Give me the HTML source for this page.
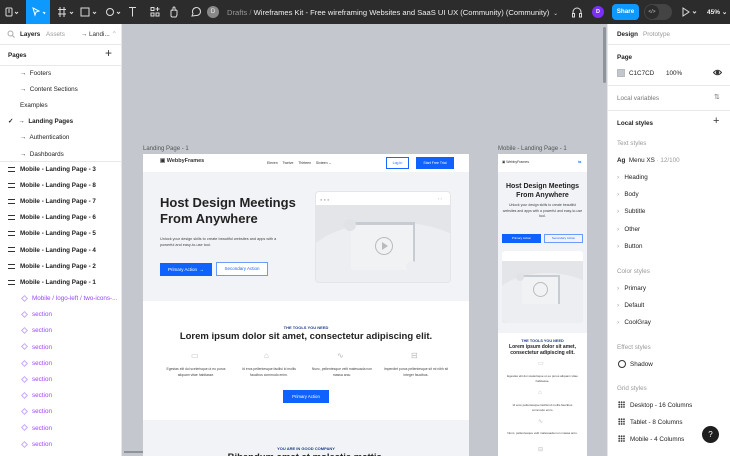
<!DOCTYPE html>
<html><head><meta charset="utf-8"><style>
*{margin:0;padding:0;box-sizing:border-box}
body{width:730px;height:456px;overflow:hidden;font-family:"Liberation Sans",sans-serif;background:#c4c8ce;position:relative}
.a{position:absolute;white-space:nowrap}
.tb{position:absolute;left:0;top:0;width:730px;height:24px;background:#2c2c2c;color:#fff}
.lp{position:absolute;left:0;top:24px;width:122px;height:432px;background:#fff;border-right:1px solid #e6e6e6}
.rp{position:absolute;left:607px;top:24px;width:123px;height:432px;background:#fff;border-left:1px solid #e6e6e6}
.li{position:absolute;font-size:6.3px;color:#222}
.bold{font-weight:bold}
.hr{position:absolute;height:1px;background:#e8e8e8}
.sec{color:#9747ff}
.ic{position:absolute;width:7px;height:5px;border-top:1.2px solid #333;border-bottom:1.2px solid #333}
.dia{position:absolute;width:5px;height:5px;border:1px solid #c9a8ff;transform:rotate(45deg)}
.rt{position:absolute;font-size:6.3px;color:#222}
.gr{color:#999}
.grid{position:absolute;width:7px;height:7px;background-image:radial-gradient(circle,#333 0.9px,transparent 1px);background-size:2.4px 2.4px}
.ft{position:absolute;width:66px;text-align:center;font-size:3.4px;color:#444;line-height:6px;white-space:normal}
</style></head><body>
<div class="tb">
 <div class="a" style="left:26px;top:0;width:24px;height:24px;background:#0d99ff"></div>
 <svg class="a" style="left:0;top:0" width="230" height="24" fill="none" stroke="#ddd" stroke-width="1">
  <rect x="6" y="8" width="6" height="8" rx="1"/><path d="M8 10h2M8 12h2"/><path d="M15 12l1.5 1.5L18 12"/>
  <path d="M33 8l6 3-3 1-1 3z" stroke="#fff"/><path d="M43 12l1.5 1.5L45 12" stroke="#fff"/>
  <path d="M60 7v10M64 7v10M58 9.5h8M58 14h8"/><path d="M70 12l1.5 1.5L73 12"/>
  <rect x="81" y="8" width="8" height="8"/><path d="M93 12l1.5 1.5L96 12"/>
  <circle cx="110" cy="12" r="3.5"/><path d="M117 12l1.5 1.5L120 12"/>
  <path d="M129 7.5h7M132.5 7.5v9"/>
  <rect x="151" y="7.5" width="3" height="3"/><rect x="151" y="13" width="3" height="3"/><rect x="156" y="13" width="3" height="3"/><path d="M157.5 7v4M155.5 9h4"/>
  <path d="M171 16v-5a1 1 0 012 0v-3a1 1 0 012 0v3a1 1 0 012 0v4l-1 2h-4z"/>
  <path d="M192 16l1-2.5a4 4 0 113 2z"/>
 </svg>
 <div class="a" style="left:207px;top:6px;width:12px;height:12px;border-radius:6px;background:#888;color:#eee;font-size:6px;text-align:center;line-height:12px">D</div>
 <div class="a" style="left:227px;top:7.5px;font-size:7.6px;color:#999">Drafts <span style="color:#777">/</span> <span style="color:#eee">Wireframes Kit - Free wireframing Websites and SaaS UI UX (Community) (Community)</span> <span style="font-size:6px;color:#ccc">&nbsp;⌄</span></div>
 <svg class="a" style="left:570px;top:5px" width="14" height="14" fill="none" stroke="#ddd" stroke-width="1"><path d="M3 9V7a4 4 0 018 0v2"/><rect x="2.5" y="8.5" width="2" height="3.5"/><rect x="9.5" y="8.5" width="2" height="3.5"/></svg>
 <div class="a" style="left:592px;top:6px;width:12px;height:12px;border-radius:6px;background:#7b2ff7;font-size:5.5px;text-align:center;line-height:12px;font-weight:bold">D</div>
 <div class="a" style="left:612px;top:4px;width:27px;height:16px;border-radius:4px;background:#0d99ff;font-size:6.3px;font-weight:bold;text-align:center;line-height:16px">Share</div>
 <div class="a" style="left:644px;top:4px;width:28px;height:16px;border-radius:8px;background:#444"><div class="a" style="left:1px;top:1px;width:14px;height:14px;border-radius:7px;background:#2c2c2c;font-size:5px;text-align:center;line-height:14px;color:#ccc">&lt;/&gt;</div></div>
 <svg class="a" style="left:680px;top:6px" width="20" height="12" fill="none" stroke="#ddd"><path d="M3 2l6 4-6 4z"/><path d="M13 5.5l1.5 1.5L16 5.5"/></svg>
 <div class="a" style="left:707px;top:8px;font-size:6.5px;color:#eee;font-weight:bold">45% ⌄</div>
</div>

<div class="lp">
 <svg class="a" style="left:7px;top:6px" width="8" height="8" fill="none" stroke="#aaa"><circle cx="3.5" cy="3.5" r="2.5"/><path d="M5.5 5.5l2 2"/></svg>
 <div class="li bold" style="left:20px;top:7px">Layers</div>
 <div class="li" style="left:46px;top:7px;color:#999">Assets</div>
 <div class="li" style="left:81px;top:7px;color:#333">→ Landi... <span style="color:#aaa">⌃</span></div>
 <div class="hr" style="left:0;top:20px;width:122px"></div>
 <div class="li bold" style="left:8px;top:28px">Pages</div>
 <div class="a" style="left:105px;top:22px;font-size:12px;color:#333">+</div>
 <div class="hr" style="left:0;top:41px;width:122px"></div>
 <div class="li" style="left:20px;top:46px">→&nbsp; Footers</div>
 <div class="li" style="left:20px;top:62px">→&nbsp; Content Sections</div>
 <div class="li" style="left:20px;top:78px">Examples</div>
 <div class="li bold" style="left:8px;top:94px">✓ &nbsp; →&nbsp; Landing Pages</div>
 <div class="li" style="left:20px;top:110px">→&nbsp; Authentication</div>
 <div class="li" style="left:20px;top:127px">→&nbsp; Dashboards</div>
 <div class="hr" style="left:0;top:137px;width:122px"></div>
 <div class="ic" style="left:8px;top:143px"></div><div class="li bold" style="left:20px;top:142px">Mobile - Landing Page - 3</div>
 <div class="ic" style="left:8px;top:159px"></div><div class="li bold" style="left:20px;top:158px">Mobile - Landing Page - 8</div>
 <div class="ic" style="left:8px;top:175px"></div><div class="li bold" style="left:20px;top:174px">Mobile - Landing Page - 7</div>
 <div class="ic" style="left:8px;top:191px"></div><div class="li bold" style="left:20px;top:190px">Mobile - Landing Page - 6</div>
 <div class="ic" style="left:8px;top:207px"></div><div class="li bold" style="left:20px;top:206px">Mobile - Landing Page - 5</div>
 <div class="ic" style="left:8px;top:223px"></div><div class="li bold" style="left:20px;top:223px">Mobile - Landing Page - 4</div>
 <div class="ic" style="left:8px;top:240px"></div><div class="li bold" style="left:20px;top:239px">Mobile - Landing Page - 2</div>
 <div class="ic" style="left:8px;top:256px"></div><div class="li bold" style="left:20px;top:255px">Mobile - Landing Page - 1</div>
 <div class="dia" style="left:22px;top:272px"></div><div class="li sec" style="left:32px;top:271px">Mobile / logo-left / two-icons-...</div>
 <div class="dia" style="left:22px;top:288px"></div><div class="li sec" style="left:32px;top:287px">section</div>
 <div class="dia" style="left:22px;top:304px"></div><div class="li sec" style="left:32px;top:303px">section</div>
 <div class="dia" style="left:22px;top:320px"></div><div class="li sec" style="left:32px;top:320px">section</div>
 <div class="dia" style="left:22px;top:337px"></div><div class="li sec" style="left:32px;top:336px">section</div>
 <div class="dia" style="left:22px;top:353px"></div><div class="li sec" style="left:32px;top:352px">section</div>
 <div class="dia" style="left:22px;top:369px"></div><div class="li sec" style="left:32px;top:368px">section</div>
 <div class="dia" style="left:22px;top:385px"></div><div class="li sec" style="left:32px;top:384px">section</div>
 <div class="dia" style="left:22px;top:401px"></div><div class="li sec" style="left:32px;top:401px">section</div>
 <div class="dia" style="left:22px;top:418px"></div><div class="li sec" style="left:32px;top:417px">section</div>
</div>

<!-- canvas -->
<div class="a" style="left:603px;top:27px;width:3px;height:56px;background:#8f949a;border-radius:2px"></div>
<div class="a" style="left:124px;top:451px;width:43px;height:2px;background:#8f949a"></div>
<div class="a" style="left:143px;top:146px;font-size:6px;color:#555">Landing Page - 1</div>
<div class="a" style="left:498px;top:146px;font-size:6px;color:#555">Mobile - Landing Page - 1</div>

<div class="a" style="left:143px;top:154px;width:326px;height:302px;background:#fff;overflow:hidden">
 <div class="a" style="left:17px;top:4px;font-size:5.5px;font-weight:bold;color:#333">▣ WebbyFrames</div>
 <div class="a" style="left:124px;top:7px;font-size:3.5px;color:#333">Eleven &nbsp;&nbsp;&nbsp; Twelve &nbsp;&nbsp;&nbsp; Thirteen &nbsp;&nbsp;&nbsp; Sixteen ⌄</div>
 <div class="a" style="left:243px;top:3px;width:23px;height:12px;border:1px solid #1a66ff;font-size:3.5px;color:#1a66ff;text-align:center;line-height:10px">Log In</div>
 <div class="a" style="left:273px;top:3px;width:38px;height:12px;background:#0f62fe;font-size:3.5px;color:#fff;text-align:center;line-height:12px">Start Free Trial</div>
 <div class="a" style="left:0;top:18px;width:326px;height:129px;background:#f2f3f6"></div>
 <div class="a" style="left:17px;top:41px;font-size:13px;font-weight:bold;color:#222;line-height:16px;white-space:normal;width:140px">Host Design Meetings From Anywhere</div>
 <div class="a" style="left:17px;top:82px;font-size:3.8px;color:#444;line-height:6px;white-space:normal;width:130px">Unlock your design skills to create beautiful websites and apps with a powerful and easy-to-use tool.</div>
 <div class="a" style="left:17px;top:109px;width:52px;height:13px;background:#0f62fe;font-size:4.5px;color:#fff;text-align:center;line-height:13px">Primary Action &nbsp;→</div>
 <div class="a" style="left:73px;top:108px;width:52px;height:14px;border:1px solid #6b9bff;background:#fff;font-size:4.5px;color:#1a66ff;text-align:center;line-height:12px">Secondary Action</div>
 <div class="a" style="left:172px;top:37px;width:136px;height:92px;background:#e3e5e9;border-radius:4px;border:1px solid #e3e5e9;overflow:hidden">
  <div class="a" style="left:0;top:0;width:136px;height:13px;background:#fff"></div>
  <div class="a" style="left:4px;top:5px;font-size:4px;color:#bbb">● ● ●</div>
  <div class="a" style="left:122px;top:4px;font-size:4px;color:#aaa">‹ ›</div>
  <div class="a" style="left:-10px;top:30px;width:170px;height:80px;border-radius:50%;background:#eceef1"></div>
  <div class="a" style="left:37px;top:30px;width:62px;height:45px;background:#c8ccd2"></div>
  <div class="a" style="left:35px;top:33px;width:62px;height:45px;background:#f1f2f4"></div>
  <div class="a" style="left:28px;top:27px;width:12px;height:12px;border-radius:6px;background:#e0e2e6"></div>
  <div class="a" style="left:90px;top:69px;width:12px;height:12px;border-radius:6px;background:#eceef1"></div>
  <div class="a" style="left:59px;top:45px;width:18px;height:18px;border-radius:9px;border:1.5px solid #bbb"></div>
  <div class="a" style="left:66px;top:50px;width:0;height:0;border-left:6px solid #bbb;border-top:4px solid transparent;border-bottom:4px solid transparent"></div>
 </div>
 <div class="a" style="left:0;top:171px;width:326px;text-align:center;font-size:4px;font-weight:bold;color:#1e3a8a">THE TOOLS YOU NEED</div>
 <div class="a" style="left:0;top:177px;width:326px;text-align:center;font-size:9.5px;font-weight:bold;color:#222">Lorem ipsum dolor sit amet, consectetur adipiscing elit.</div>
 <div class="a" style="left:48px;top:197px;font-size:8px;color:#bbb">▭</div>
 <div class="a" style="left:121px;top:197px;font-size:8px;color:#bbb">⌂</div>
 <div class="a" style="left:194px;top:197px;font-size:8px;color:#bbb">∿</div>
 <div class="a" style="left:268px;top:197px;font-size:8px;color:#bbb">⊟</div>
 <div class="ft" style="left:20px;top:212px">Egestas elit dui scelerisque ut eu purus aliquam vitae habitasse.</div>
 <div class="ft" style="left:93px;top:212px">Id eros pellentesque facilisi id mollis faucibus commodo enim.</div>
 <div class="ft" style="left:166px;top:212px">Nunc, pellentesque velit malesuada non massa arcu.</div>
 <div class="ft" style="left:240px;top:212px">Imperdiet purus pellentesque sit mi nibh sit integer faucibus.</div>
 <div class="a" style="left:140px;top:236px;width:46px;height:13px;background:#0f62fe;font-size:4.3px;color:#fff;text-align:center;line-height:13px">Primary Action</div>
 <div class="a" style="left:0;top:266px;width:326px;height:40px;background:#f2f3f6"></div>
 <div class="a" style="left:0;top:292px;width:326px;text-align:center;font-size:4px;font-weight:bold;color:#1e3a8a">YOU ARE IN GOOD COMPANY</div>
 <div class="a" style="left:0;top:298px;width:326px;text-align:center;font-size:9.5px;font-weight:bold;color:#222">Bibendum amet at molestie mattis.</div>
</div>

<div class="a" style="left:498px;top:154px;width:89px;height:302px;background:#fff;overflow:hidden">
 <div class="a" style="left:4px;top:6px;font-size:3.5px;color:#333">▣ WebbyFrames</div>
 <div class="a" style="left:80px;top:5px;font-size:4px;color:#1a66ff">⇆</div>
 <div class="a" style="left:0;top:18px;width:89px;height:161px;background:#f2f3f6"></div>
 <div class="a" style="left:0;top:28px;width:89px;text-align:center;font-size:7px;font-weight:bold;color:#222;line-height:9px;white-space:normal">Host Design Meetings From Anywhere</div>
 <div class="a" style="left:4px;top:49px;width:81px;text-align:center;font-size:3.5px;color:#444;line-height:5.5px;white-space:normal">Unlock your design skills to create beautiful websites and apps with a powerful and easy-to-use tool.</div>
 <div class="a" style="left:4px;top:80px;width:39px;height:9px;background:#0f62fe;font-size:3px;color:#fff;text-align:center;line-height:9px">Primary Action</div>
 <div class="a" style="left:46px;top:80px;width:39px;height:9px;border:1px solid #6b9bff;font-size:3px;color:#1a66ff;text-align:center;line-height:7px">Secondary Action</div>
 <div class="a" style="left:4px;top:97px;width:81px;height:72px;background:#e3e5e9;border-radius:3px;overflow:hidden">
  <div class="a" style="left:0;top:0;width:81px;height:10px;background:#fff"></div>
  <div class="a" style="left:-10px;top:22px;width:110px;height:60px;border-radius:50%;background:#eceef1"></div>
  <div class="a" style="left:20px;top:24px;width:38px;height:29px;background:#f1f2f4;border-top:2px solid #c8ccd2;border-right:2px solid #c8ccd2"></div>
  <div class="a" style="left:31px;top:31px;width:15px;height:15px;border-radius:8px;border:1.3px solid #bbb"></div>
  <div class="a" style="left:14px;top:22px;width:8px;height:8px;border-radius:4px;background:#e0e2e6"></div>
 </div>
 <div class="a" style="left:0;top:185px;width:89px;text-align:center;font-size:3.8px;font-weight:bold;color:#1e3a8a">THE TOOLS YOU NEED</div>
 <div class="a" style="left:0;top:190px;width:89px;text-align:center;font-size:5px;font-weight:bold;color:#222;line-height:6px;white-space:normal">Lorem ipsum dolor sit amet, consectetur adipiscing elit.</div>
 <div class="a" style="left:40px;top:206px;font-size:6px;color:#bbb">▭</div>
 <div class="a" style="left:8px;top:220px;width:73px;text-align:center;font-size:3px;color:#444;line-height:5px;white-space:normal">Egestas elit dui scelerisque ut eu purus aliquam vitae habitasse.</div>
 <div class="a" style="left:40px;top:236px;font-size:6px;color:#bbb">⌂</div>
 <div class="a" style="left:8px;top:249px;width:73px;text-align:center;font-size:3px;color:#444;line-height:5px;white-space:normal">Id eros pellentesque facilisi id mollis faucibus commodo enim.</div>
 <div class="a" style="left:40px;top:264px;font-size:6px;color:#bbb">∿</div>
 <div class="a" style="left:8px;top:277px;width:73px;text-align:center;font-size:3px;color:#444;line-height:5px;white-space:normal">Nunc, pellentesque velit malesuada non massa arcu.</div>
 <div class="a" style="left:40px;top:292px;font-size:6px;color:#bbb">⊟</div>
</div>

<div class="rp">
 <div class="rt bold" style="left:9px;top:7px">Design</div>
 <div class="rt gr" style="left:35px;top:7px">Prototype</div>
 <div class="hr" style="left:0;top:20px;width:123px"></div>
 <div class="rt bold" style="left:9px;top:30px">Page</div>
 <div class="a" style="left:9px;top:45px;width:8px;height:8px;background:#c1c7cd;border:1px solid #bbb"></div>
 <div class="rt" style="left:21px;top:46px">C1C7CD</div>
 <div class="rt" style="left:58px;top:46px">100%</div>
 <svg class="a" style="left:105px;top:45px" width="9" height="7" fill="none" stroke="#333"><path d="M0.5 3.5Q4.5 -1 8.5 3.5Q4.5 8 0.5 3.5z"/><circle cx="4.5" cy="3.5" r="1.2" fill="#333"/></svg>
 <div class="hr" style="left:0;top:61px;width:123px"></div>
 <div class="rt gr" style="left:9px;top:71px;color:#777">Local variables</div>
 <div class="a" style="left:106px;top:69px;font-size:7px;color:#777">⇅</div>
 <div class="hr" style="left:0;top:86px;width:123px"></div>
 <div class="rt bold" style="left:9px;top:96px">Local styles</div>
 <div class="a" style="left:105px;top:91px;font-size:11px;color:#333">+</div>
 <div class="rt gr" style="left:9px;top:116px">Text styles</div>
 <div class="rt" style="left:9px;top:133px"><b>Ag</b> &nbsp;Menu XS <span class="gr">· 12/100</span></div>
 <div class="rt" style="left:9px;top:150px"><span class="gr">›</span> &nbsp;&nbsp;Heading</div>
 <div class="rt" style="left:9px;top:167px"><span class="gr">›</span> &nbsp;&nbsp;Body</div>
 <div class="rt" style="left:9px;top:184px"><span class="gr">›</span> &nbsp;&nbsp;Subtitle</div>
 <div class="rt" style="left:9px;top:202px"><span class="gr">›</span> &nbsp;&nbsp;Other</div>
 <div class="rt" style="left:9px;top:219px"><span class="gr">›</span> &nbsp;&nbsp;Button</div>
 <div class="rt gr" style="left:9px;top:244px">Color styles</div>
 <div class="rt" style="left:9px;top:261px"><span class="gr">›</span> &nbsp;&nbsp;Primary</div>
 <div class="rt" style="left:9px;top:278px"><span class="gr">›</span> &nbsp;&nbsp;Default</div>
 <div class="rt" style="left:9px;top:295px"><span class="gr">›</span> &nbsp;&nbsp;CoolGray</div>
 <div class="rt gr" style="left:9px;top:320px">Effect styles</div>
 <div class="a" style="left:10px;top:336px;width:8px;height:8px;border-radius:4px;border:1px solid #333"></div>
 <div class="rt" style="left:22px;top:337px">Shadow</div>
 <div class="rt gr" style="left:9px;top:361px">Grid styles</div>
 <div class="grid" style="left:10px;top:377px"></div><div class="rt" style="left:22px;top:378px">Desktop - 16 Columns</div>
 <div class="grid" style="left:10px;top:394px"></div><div class="rt" style="left:22px;top:395px">Tablet - 8 Columns</div>
 <div class="grid" style="left:10px;top:411px"></div><div class="rt" style="left:22px;top:412px">Mobile - 4 Columns</div>
 <div class="a" style="left:94px;top:402px;width:17px;height:17px;border-radius:9px;background:#1e1e1e;color:#fff;font-size:8px;text-align:center;line-height:17px">?</div>
</div>
</body></html>
